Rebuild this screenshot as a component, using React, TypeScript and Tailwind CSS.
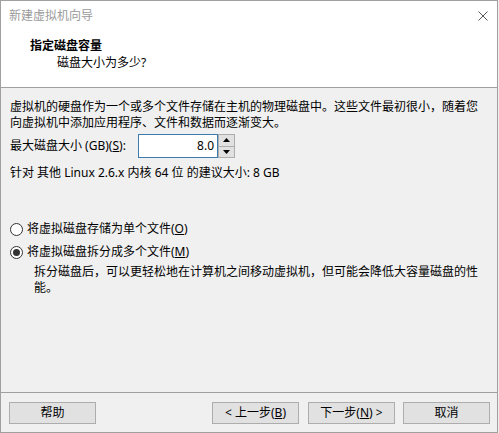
import React from "react";

/**
 * Spinner arrow buttons next to the size field
 */
function SpinButtons() {
  return (
    <div className="flex flex-col w-[17px] h-[24px]">
      <button className="flex-1 flex items-center justify-center bg-[#e1e1e1] border border-[#adadad]">
        <svg width="7" height="4" viewBox="0 0 7 4">
          <path d="M3.5 0 L7 4 L0 4 Z" fill="#000" />
        </svg>
      </button>
      <button className="flex-1 flex items-center justify-center bg-[#e1e1e1] border border-t-0 border-[#adadad]">
        <svg width="7" height="4" viewBox="0 0 7 4">
          <path d="M0 0 L7 0 L3.5 4 Z" fill="#000" />
        </svg>
      </button>
    </div>
  );
}

/**
 * Windows-style radio button
 */
function RadioOption({ checked, children }: { checked?: boolean; children: React.ReactNode }) {
  return (
    <label className="flex items-center gap-[4px] h-[16px]">
      <span className="w-[13px] h-[13px] rounded-full border border-[#333] bg-white flex items-center justify-center">
        {checked && <span className="w-[7px] h-[7px] rounded-full bg-[#333]" />}
      </span>
      <span className="whitespace-nowrap">{children}</span>
    </label>
  );
}

function DialogButton({ children, className }: { children: React.ReactNode; className?: string }) {
  return (
    <button
      className={
        "w-[87px] h-[22px] bg-[#e1e1e1] border border-[#adadad] flex items-center justify-center leading-[16px] " +
        (className ?? "")
      }
    >
      {children}
    </button>
  );
}

export default function App() {
  return (
    <div className="w-[499px] h-[433px] bg-[#f0f0f0] font-['Noto_Sans','Noto_Sans_CJK_SC',sans-serif] text-[12px] text-black">
      <div className="w-[498px] h-[433px] border border-[#a0a0a0] flex flex-col">
        {/* Header */}
        <header className="h-[87px] shrink-0 bg-white border-b border-[#a0a0a0] flex flex-col">
          <div className="h-[29px] flex items-center justify-between pl-[8px] pr-[8px]">
            <span className="text-[#9a9a9a] leading-[16px]">新建虚拟机向导</span>
            <svg width="10" height="10" viewBox="0 0 10 10" className="mr-[1px]">
              <path d="M0.5 0.5 L9.5 9.5 M9.5 0.5 L0.5 9.5" stroke="#555" strokeWidth="1" />
            </svg>
          </div>
          <div className="pl-[29px] mt-[8px] font-bold leading-[16px]">指定磁盘容量</div>
          <div className="pl-[56px] mt-[1px] leading-[16px]">磁盘大小为多少?</div>
        </header>

        {/* Body */}
        <div className="flex-1 pl-[9px] pt-[11px] leading-[16px]">
          <p className="whitespace-nowrap">
            虚拟机的硬盘作为一个或多个文件存储在主机的物理磁盘中。这些文件最初很小，随着您
            <br />
            向虚拟机中添加应用程序、文件和数据而逐渐变大。
          </p>

          <div className="mt-[3px] flex items-center h-[24px]">
            <span className="w-[128px] whitespace-nowrap">
              最大磁盘大小 (GB)(<span className="underline">S</span>):
            </span>
            <div className="w-[80px] h-[24px] bg-white border border-[#3d7bad] flex items-center justify-end pr-[3px]">
              8.0
            </div>
            <SpinButtons />
          </div>

          <p className="mt-[7px] whitespace-nowrap">针对 其他 Linux 2.6.x 内核 64 位 的建议大小: 8 GB</p>

          <div className="mt-[40px] flex flex-col gap-[7px]">
            <RadioOption>
              将虚拟磁盘存储为单个文件(<span className="underline">O</span>)
            </RadioOption>
            <RadioOption checked>
              将虚拟磁盘拆分成多个文件(<span className="underline">M</span>)
            </RadioOption>
          </div>

          <p className="mt-[4px] pl-[24px] whitespace-nowrap">
            拆分磁盘后，可以更轻松地在计算机之间移动虚拟机，但可能会降低大容量磁盘的性
            <br />
            能。
          </p>
        </div>

        {/* Footer */}
        <footer className="shrink-0 h-[40px] border-t border-[#a0a0a0] flex items-start justify-between pt-[9px] pl-[8px] pr-[7px]">
          <DialogButton>帮助</DialogButton>
          <div className="flex">
            <DialogButton className="w-[86px]">
              &lt; 上一步(<span className="underline">B</span>)
            </DialogButton>
            <DialogButton className="ml-[9px]">
              下一步(<span className="underline">N</span>) &gt;
            </DialogButton>
            <DialogButton className="ml-[8px] w-[86px]">取消</DialogButton>
          </div>
        </footer>
      </div>
    </div>
  );
}
